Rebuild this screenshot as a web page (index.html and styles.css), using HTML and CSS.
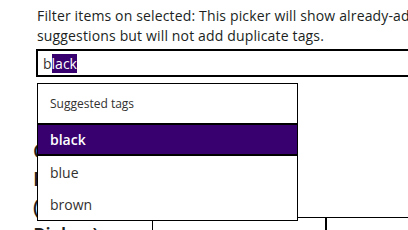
FILE: index.html
```html
<!DOCTYPE html>
<html lang="en">
<head>
  <meta charset="UTF-8" />
  <meta name="viewport" content="width=device-width, initial-scale=1.0" />
  <title>Tag Picker</title>

  <link rel="stylesheet" href="styles.css">

</head>
<body>

<div class="page">
  <p class="intro">Filter items on selected: This picker will show already-added suggestions but will not add duplicate tags.</p>

  <div class="picker">
    <div class="picker-field">
      <span class="picker-input">b<span class="selection">lack</span></span>
    </div>

    <div class="callout">
      <div class="callout-header">Suggested tags</div>
      <div class="suggestion selected">black</div>
      <div class="suggestion">blue</div>
      <div class="suggestion">brown</div>
    </div>
  </div>

  <div class="section">
    <h2 class="section-title">Custom Filter (Tag Picker)</h2>
    <div class="grid">
      <div class="grid-cell"></div>
      <div class="grid-cell"></div>
    </div>
  </div>
</div>

</body>
</html>
```

FILE: styles.css
```css
    * {
      box-sizing: border-box;
    }

    body {
      margin: 0;
      font-family: "Segoe UI", "Open Sans", sans-serif;
      font-size: 14px;
      color: #201f1e;
      background-color: white;
      overflow: hidden;
    }

    .page {
      width: 560px;
      padding-left: 36px;
    }

    .intro {
      width: 425px;
      margin: 6px 0 0 1px;
      line-height: 20px;
      letter-spacing: 0.15px;
    }

    .picker {
      position: relative;
      margin-top: 3px;
    }

    .picker-field {
      height: 28px;
      border: 2px solid black;
      padding-left: 5px;
      display: flex;
      align-items: center;
    }

    .picker-input {
      line-height: 19px;
      color: #323130;
    }

    .selection {
      background-color: #37006e;
      color: white;
    }

    .callout {
      position: absolute;
      top: 34px;
      left: 1px;
      width: 261px;
      background: white;
      border: 1px solid black;
      z-index: 2;
    }

    .callout-header {
      height: 39px;
      padding-left: 12px;
      display: flex;
      align-items: center;
      font-size: 12px;
      color: #323130;
    }

    .suggestion {
      height: 32px;
      padding-left: 12px;
      display: flex;
      align-items: center;
      color: #323130;
    }

    .suggestion.selected {
      height: 33px;
      background-color: #37006e;
      border-top: 2px solid black;
      border-bottom: 2px solid black;
      color: white;
      font-weight: 600;
    }

    .section {
      display: flex;
      align-items: flex-start;
      margin-left: -3px;
      margin-top: 60px;
    }

    .section-title {
      width: 119px;
      margin: 0;
      padding-right: 30px;
      font-size: 20px;
      font-weight: 600;
      line-height: 28px;
    }

    .grid {
      display: flex;
      margin-top: 80px;
      border-top: 1px solid black;
    }

    .grid-cell {
      width: 173px;
      height: 40px;
      border-left: 1px solid black;
    }

    .grid-cell + .grid-cell {
      border-left-width: 2px;
    }
```
